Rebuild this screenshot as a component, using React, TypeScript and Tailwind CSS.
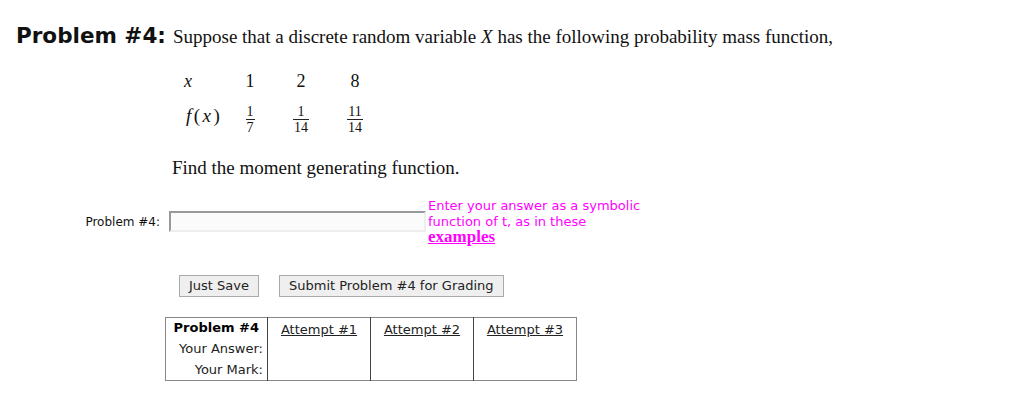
import React from 'react';

const sans = "font-['DejaVu_Sans',Verdana,sans-serif]";
const serif = "font-['Liberation_Serif','Times_New_Roman',serif]";

const Frac: React.FC<{ n: string; d: string }> = ({ n, d }) => (
  <span className="inline-flex flex-col items-center text-[14px] leading-[15px]">
    <span className="px-[1px]">{n}</span>
    <span className="px-[1px] border-t border-[#222] w-full text-center">{d}</span>
  </span>
);

const App: React.FC = () => {
  return (
    <div className="w-[1024px] h-[405px] bg-white text-[#111] relative overflow-hidden">
      {/* heading */}
      <div className="flex items-baseline pl-[16px] pt-[22px]">
        <h1 className={`${sans} font-bold text-[21.5px] leading-[28px] mr-[7px]`}>Problem #4:</h1>
        <p className={`${serif} text-[19px] leading-[28px]`}>
          Suppose that a discrete random variable <i>X</i> has the following probability mass function,
        </p>
      </div>

      {/* pmf table */}
      <div className={`${serif} ml-[174px] mt-[17px] text-[18px]`}>
        <div className="grid grid-cols-[50px_52px_50px_58px] items-center h-[26px]">
          <span className="italic pl-[10px]">x</span>
          <span className="text-center">1</span>
          <span className="text-center">2</span>
          <span className="text-center">8</span>
        </div>
        <div className="grid grid-cols-[50px_52px_50px_58px] items-center h-[36px] mt-[3px]">
          <span className="pl-[12px] text-[19px] tracking-[2.5px]"><i>f</i>(<i>x</i>)</span>
          <span className="text-center"><Frac n="1" d="7" /></span>
          <span className="text-center"><Frac n="1" d="14" /></span>
          <span className="text-center"><Frac n="11" d="14" /></span>
        </div>
      </div>

      <p className={`${serif} text-[19px] leading-[24px] ml-[172px] mt-[23px]`}>Find the moment generating function.</p>

      {/* answer row */}
      <div className="flex items-center mt-[18px]">
        <label className={`${sans} text-[12px] w-[160px] text-right`}>Problem #4:</label>
        <input
          type="text"
          className="ml-[9px] w-[257px] h-[21px] bg-[#fbfbfb] border-2 border-t-[#999] border-l-[#999] border-b-[#eee] border-r-[#eee] outline-none"
        />
        <div className={`${sans} ml-[2px] text-[13px] leading-[15.5px] text-[#ff00ff]`}>
          <div>Enter your answer as a symbolic</div>
          <div>function of t, as in these</div>
          <a className={`${serif} font-bold underline text-[17px] leading-[16px]`} href="#">examples</a>
        </div>
      </div>

      {/* buttons */}
      <div className={`${sans} flex gap-[20px] ml-[179px] mt-[29px] text-[13px]`}>
        <button className="h-[22px] px-[9px] bg-[#efefef] border border-[#aaa] text-[#222]">Just Save</button>
        <button className="h-[22px] px-[9px] bg-[#efefef] border border-[#aaa] text-[#222]">Submit Problem #4 for Grading</button>
      </div>

      {/* attempts table */}
      <table className={`${sans} ml-[165px] mt-[20px] border border-[#888] border-collapse text-[13px] text-[#222]`}>
        <tbody>
          <tr className="h-[21px]">
            <td className="w-[102px] text-right pr-[8px] font-bold text-black border-r border-[#444]">Problem #4</td>
            <td className="w-[103px] text-center align-middle border-r border-[#444]" rowSpan={3}>
              <div className="h-[62px] pt-[2px]"><a className="underline" href="#">Attempt #1</a></div>
            </td>
            <td className="w-[103px] text-center border-r border-[#444]" rowSpan={3}>
              <div className="h-[62px] pt-[2px]"><a className="underline" href="#">Attempt #2</a></div>
            </td>
            <td className="w-[103px] text-center" rowSpan={3}>
              <div className="h-[62px] pt-[2px]"><a className="underline" href="#">Attempt #3</a></div>
            </td>
          </tr>
          <tr className="h-[21px]">
            <td className="text-right pr-[4px] border-r border-[#444]">Your Answer:</td>
          </tr>
          <tr className="h-[21px]">
            <td className="text-right pr-[4px] border-r border-[#444]">Your Mark:</td>
          </tr>
        </tbody>
      </table>
    </div>
  );
};

export default App;
